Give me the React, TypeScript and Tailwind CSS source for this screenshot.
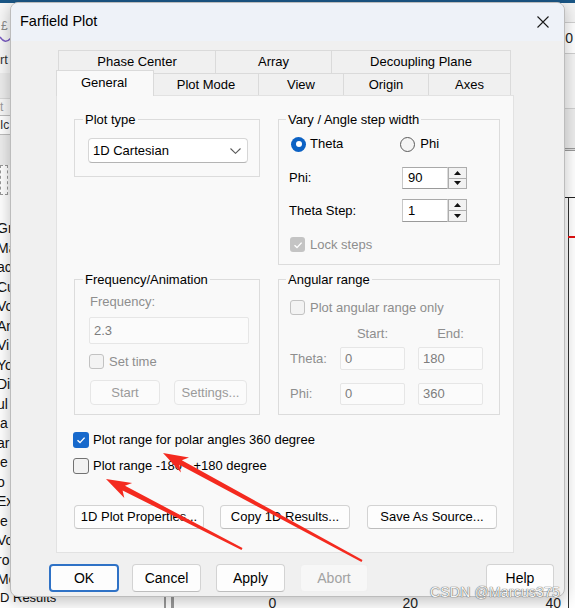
import React from "react";

function arrowPoints(tx: number, ty: number, ex: number, ey: number) {
  const L = 25, W = 8.5, w0 = 2.6, w1 = 1.1;
  const dx = ex - tx, dy = ey - ty;
  const len = Math.hypot(dx, dy);
  const ux = dx / len, uy = dy / len;
  const nx = -uy, ny = ux;
  const bx = tx + ux * L, by = ty + uy * L;
  const kx = tx + ux * (L - 5), ky = ty + uy * (L - 5);
  const p: number[][] = [
    [tx, ty],
    [bx + nx * W, by + ny * W],
    [kx + nx * w0, ky + ny * w0],
    [ex + nx * w1, ey + ny * w1],
    [ex - nx * w1, ey - ny * w1],
    [kx - nx * w0, ky - ny * w0],
    [bx - nx * W, by - ny * W],
  ];
  return p.map((q) => q[0].toFixed(1) + "," + q[1].toFixed(1)).join(" ");
}

function Check({ on, disabled }: { on?: boolean; disabled?: boolean }) {
  if (on) {
    return (
      <div
        className={
          disabled
            ? "w-[15px] h-[15px] rounded-[3px] bg-[#c4c4c4] flex items-center justify-center shrink-0"
            : "w-[16px] h-[16px] rounded-[3px] bg-[#1769cc] flex items-center justify-center shrink-0"
        }
      >
        <svg width="12" height="12" viewBox="0 0 12 12">
          <path d="M2.5 6.3 L5 8.6 L9.6 3.6" fill="none" stroke="#ffffff" strokeWidth="1.4" />
        </svg>
      </div>
    );
  }
  return (
    <div
      className={
        disabled
          ? "w-[15px] h-[15px] rounded-[3px] border border-[#c2c2c2] bg-[#f3f3f3] shrink-0"
          : "w-[16px] h-[16px] rounded-[3px] border border-[#727272] bg-[#f2f2f2] shrink-0"
      }
    />
  );
}

function Radio({ on }: { on?: boolean }) {
  if (on) {
    return (
      <div className="w-[15px] h-[15px] rounded-full bg-[#0c62c4] flex items-center justify-center shrink-0">
        <div className="w-[6px] h-[6px] rounded-full bg-white" />
      </div>
    );
  }
  return <div className="w-[15px] h-[15px] rounded-full border border-[#5b5b5b] bg-[#f4f4f4] shrink-0" />;
}

function Spin({ value, h }: { value: string; h: string }) {
  return (
    <div className={"flex " + h}>
      <div className="w-[46px] h-full bg-white border border-[#dadada] border-t-[#a9a9a9] border-l-[#c8c8c8] border-b-[#9a9a9a] flex items-center pl-[5px] text-[13px] text-black">
        {value}
      </div>
      <div className="w-[19px] h-full flex flex-col border border-[#adadad] bg-[#e9e9e9]">
        <div className="flex-1 flex items-center justify-center border-b border-[#adadad] bg-[#f2f2f2]">
          <svg width="7" height="4" viewBox="0 0 7 4">
            <path d="M0 4 L3.5 0 L7 4 Z" fill="#111" />
          </svg>
        </div>
        <div className="flex-1 flex items-center justify-center bg-[#f2f2f2]">
          <svg width="7" height="4" viewBox="0 0 7 4">
            <path d="M0 0 L3.5 4 L7 0 Z" fill="#111" />
          </svg>
        </div>
      </div>
    </div>
  );
}

function DisInput({ value, w, h }: { value: string; w: string; h: string }) {
  return (
    <div className={w + " " + h + " bg-[#fbfbfb] border border-[#e6e6e6] rounded-[2px] flex items-center pl-[4px] text-[13px] text-[#7d7d7d]"}>
      {value}
    </div>
  );
}

export default function App() {
  const leftWords = [
    "Gro", "Ma", "ac", "Cu", "Vo", "An", "Vi", "Yo", "Di", "ul",
    "la", "ar", "ie", "o", "Ex", "ie", "Vo", "ro", "Me",
  ];
  return (
    <div className="relative w-[575px] h-[608px] overflow-hidden bg-[#f4f4f4] font-['Liberation_Sans',Arial,sans-serif] text-[13px] text-black">
      {/* background application behind the dialog */}
      <div className="absolute inset-0 flex flex-col">
        <div className="h-[3px] bg-[#1b5786] shrink-0" />
        <div className="flex flex-1 min-h-0">
          <div className="w-[60px] flex flex-col bg-[#f7f7f7]">
            <div className="h-[30px] shrink-0 flex items-end pl-[1px] text-[#8a8a8a] text-[12px] leading-[14px]">£</div>
            <div className="h-[14px] shrink-0 flex items-center">
              <svg width="12" height="8" viewBox="0 0 12 8">
                <path d="M0 1 Q5 9 11 2" fill="none" stroke="#7a5cc2" strokeWidth="1.5" />
              </svg>
            </div>
            <div className="h-[26px] shrink-0 flex items-center text-[13px] text-[#333]">rt</div>
            <div className="h-[26px] shrink-0 bg-[#ececec] border-b border-[#d8d8d8]" />
            <div className="h-[16px] shrink-0 flex items-center text-[12px] text-[#9a9a9a]">t</div>
            <div className="h-[20px] shrink-0 border-y border-[#bdbdbd] bg-white flex items-center text-[12px] text-[#333]">Ic</div>
            <div className="h-[30px] shrink-0 bg-[#ededed]" />
            <div className="h-[30px] shrink-0 border border-dashed border-[#999] bg-white mr-[50px]" />
            <div className="h-[23px] shrink-0 bg-white" />
            <div className="flex flex-col bg-white flex-1 pt-[1px]">
              {leftWords.map((w, i) => (
                <div key={i} className="h-[19.5px] shrink-0 leading-[19.5px] text-[14px] text-[#111] -ml-[3px]">
                  {w}
                </div>
              ))}
              <div className="h-[14px] shrink-0 leading-[14px] text-[13px] text-[#111] mt-[1px]">D Results</div>
            </div>
          </div>
          <div className="flex-1 flex flex-col justify-end bg-white">
            <div className="h-[12px] flex items-start text-[14px] text-[#222] leading-[14px]">
              <div className="w-[106px]" />
              <div className="w-[2px] h-[12px] bg-[#9a9a9a]" />
              <div className="w-[5px]" />
              <div className="w-[3px] h-[12px] bg-[#9a9a9a]" />
              <div className="w-[93px]" />
              <div className="w-[10px] text-center">0</div>
              <div className="w-[123px]" />
              <div className="w-[20px] text-center">20</div>
              <div className="w-[123px]" />
              <div className="w-[20px] text-center">40</div>
            </div>
          </div>
          <div className="w-[12px] flex flex-col bg-white">
            <div className="h-[20px] bg-[#f4f4f4] border-b border-[#d0d0d0]" />
            <div className="h-[30px] flex items-center text-[14px] text-[#222] pl-[2px]">0</div>
            <div className="h-[55px] border-t border-[#cfcfcf] bg-[#f4f4f4]" />
            <div className="h-[40px] border-t border-[#cfcfcf] bg-[#ececec]" />
            <div className="h-[3px] border-y border-[#9a9a9a] bg-[#dedede]" />
            <div className="h-[47px] bg-white border-b border-[#222]" />
            <div className="flex-1 border-l border-[#333] ml-[5px] relative">
              <div className="absolute left-[-1px] top-[38px] w-[8px] h-[2px] bg-[#e01010]" />
            </div>
          </div>
        </div>
      </div>

      {/* dialog window */}
      <div className="absolute left-[10px] top-[2px] w-[555px] h-[595px] rounded-[8px] border border-[#bcbcbc] bg-[#f0f0f0] shadow-[0_4px_16px_rgba(0,0,0,0.25)] overflow-hidden flex flex-col">
        <div className="h-[38px] shrink-0 bg-[#eef2f8] flex items-center justify-between pl-[9px] pr-[15px]">
          <div className="text-[14.5px] text-black">Farfield Plot</div>
          <svg width="12" height="12" viewBox="0 0 12 12">
            <path d="M0.5 0.5 L11.5 11.5 M11.5 0.5 L0.5 11.5" stroke="#1a1a1a" strokeWidth="1.1" />
          </svg>
        </div>

        <div className="flex flex-col pt-[9px]">
          {/* back row of tabs */}
          <div className="flex ml-[47px] h-[23px]">
            <div className="w-[158px] h-full border border-b-0 border-[#dadada] bg-[#f0f0f0] flex items-center justify-center pb-[1px]">Phase Center</div>
            <div className="w-[116px] h-full border border-b-0 border-l-0 border-[#dadada] bg-[#f0f0f0] flex items-center justify-center pb-[1px]">Array</div>
            <div className="w-[179px] h-full border border-b-0 border-l-0 border-[#dadada] bg-[#f0f0f0] flex items-center justify-center pb-[1px]">Decoupling Plane</div>
          </div>
          {/* front row of tabs */}
          <div className="flex ml-[45px] h-[22px] relative z-10 items-end">
            <div className="w-[98px] h-[26px] -mb-[1px] border border-b-0 border-[#dadada] bg-[#f9f9f9] flex items-center justify-center pb-[2px] pr-[2px]">General</div>
            <div className="w-[105px] h-[22px] border border-b-0 border-l-0 border-[#dadada] bg-[#f0f0f0] flex items-center justify-center">Plot Mode</div>
            <div className="w-[85px] h-[22px] border border-b-0 border-l-0 border-[#dadada] bg-[#f0f0f0] flex items-center justify-center">View</div>
            <div className="w-[85px] h-[22px] border border-b-0 border-l-0 border-[#dadada] bg-[#f0f0f0] flex items-center justify-center">Origin</div>
            <div className="w-[82px] h-[22px] border border-b-0 border-l-0 border-[#dadada] bg-[#f0f0f0] flex items-center justify-center">Axes</div>
          </div>

          {/* panel */}
          <div className="ml-[45px] w-[458px] h-[458px] border border-[#e2e2e2] bg-[#f9f9f9] flex flex-col pl-[16px] pt-[16px]">
            <div className="grid grid-cols-[186px_222px] gap-x-[18px] gap-y-[7px] ml-[1px] items-start">
              {/* Plot type */}
              <fieldset className="border border-[#dcdcdc] pl-[13px] pb-[13px] h-[65px]">
                <legend className="-ml-[5px] px-[2px] leading-[15px]">Plot type</legend>
                <div className="mt-[11px] w-[160px] h-[25px] bg-white border border-[#d6d6d6] border-b-[#b4b4b4] rounded-[4px] flex items-center justify-between pl-[4px] pr-[6px]">
                  <span>1D Cartesian</span>
                  <svg width="11" height="6" viewBox="0 0 11 6">
                    <path d="M0.5 0.5 L5.5 5.3 L10.5 0.5" fill="none" stroke="#5a5a5a" strokeWidth="1.1" />
                  </svg>
                </div>
              </fieldset>

              {/* Vary / Angle step width */}
              <fieldset className="border border-[#dcdcdc] pl-[10px] h-[153px]">
                <legend className="-ml-[3px] px-[2px] leading-[15px]">Vary / Angle step width</legend>
                <div className="mt-[8px] h-[18px] flex items-center">
                  <div className="ml-[2px]"><Radio on /></div>
                  <span className="ml-[4px]">Theta</span>
                  <div className="ml-[57px]"><Radio /></div>
                  <span className="ml-[5px]">Phi</span>
                </div>
                <div className="mt-[14px] h-[22px] flex items-center">
                  <span className="w-[113px]">Phi:</span>
                  <Spin value="90" h="h-[22px]" />
                </div>
                <div className="mt-[10px] h-[23px] flex items-center">
                  <span className="w-[113px]">Theta Step:</span>
                  <Spin value="1" h="h-[23px]" />
                </div>
                <div className="mt-[15px] h-[15px] flex items-center">
                  <div className="ml-[1px]"><Check on disabled /></div>
                  <span className="ml-[5px] text-[#8e8e8e]">Lock steps</span>
                </div>
              </fieldset>

              {/* Frequency / Animation */}
              <fieldset className="border border-[#dcdcdc] pl-[14px] h-[143px]">
                <legend className="-ml-[6px] px-[2px] leading-[15px]">Frequency/Animation</legend>
                <div className="mt-[7px] h-[15px] flex items-center text-[#8e8e8e] ml-[1px]">Frequency:</div>
                <div className="mt-[8px]">
                  <DisInput value="2.3" w="w-[160px]" h="h-[27px]" />
                </div>
                <div className="mt-[10px] h-[15px] flex items-center">
                  <Check disabled />
                  <span className="ml-[5px] text-[#8e8e8e]">Set time</span>
                </div>
                <div className="mt-[11px] flex h-[25px]">
                  <div className="ml-[1px] w-[70px] h-full border border-[#e6e6e6] rounded-[4px] bg-[#fbfbfb] flex items-center justify-center text-[#9a9a9a]">Start</div>
                  <div className="ml-[14px] w-[73px] h-full border border-[#e6e6e6] rounded-[4px] bg-[#fbfbfb] flex items-center justify-center text-[#9a9a9a]">Settings...</div>
                </div>
              </fieldset>

              {/* Angular range */}
              <fieldset className="border border-[#dcdcdc] pl-[11px] h-[143px]">
                <legend className="-ml-[4px] px-[2px] leading-[15px]">Angular range</legend>
                <div className="mt-[13px] h-[15px] flex items-center">
                  <Check disabled />
                  <span className="ml-[5px] text-[#8e8e8e]">Plot angular range only</span>
                </div>
                <div className="mt-[11px] h-[15px] flex items-center text-[#8e8e8e]">
                  <div className="w-[50px]" />
                  <div className="w-[65px] text-center">Start:</div>
                  <div className="w-[13px]" />
                  <div className="w-[65px] text-center">End:</div>
                </div>
                <div className="mt-[6px] h-[23px] flex items-center">
                  <div className="w-[50px] text-[#8e8e8e]">Theta:</div>
                  <DisInput value="0" w="w-[65px]" h="h-[23px]" />
                  <div className="w-[13px]" />
                  <DisInput value="180" w="w-[65px]" h="h-[23px]" />
                </div>
                <div className="mt-[13px] h-[22px] flex items-center">
                  <div className="w-[50px] text-[#8e8e8e]">Phi:</div>
                  <DisInput value="0" w="w-[65px]" h="h-[22px]" />
                  <div className="w-[13px]" />
                  <DisInput value="360" w="w-[65px]" h="h-[22px]" />
                </div>
              </fieldset>
            </div>

            <div className="mt-[16px] h-[17px] flex items-center">
              <Check on />
              <span className="ml-[4px]">Plot range for polar angles 360 degree</span>
            </div>
            <div className="mt-[9px] h-[17px] flex items-center">
              <Check />
              <span className="ml-[4px]">Plot range -180 - +180 degree</span>
            </div>

            <div className="mt-[31px] flex h-[24px] ml-[1px]">
              <div className="w-[130px] h-full bg-[#fdfdfd] border border-[#d3d3d3] border-b-[#bdbdbd] rounded-[4px] flex items-center justify-center">1D Plot Properties...</div>
              <div className="ml-[16px] w-[130px] h-full bg-[#fdfdfd] border border-[#d3d3d3] border-b-[#bdbdbd] rounded-[4px] flex items-center justify-center">Copy 1D Results...</div>
              <div className="ml-[17px] w-[130px] h-full bg-[#fdfdfd] border border-[#d3d3d3] border-b-[#bdbdbd] rounded-[4px] flex items-center justify-center">Save As Source...</div>
            </div>
          </div>

          {/* bottom buttons */}
          <div className="mt-[11px] flex h-[28px] ml-[38px] text-[14px]">
            <div className="w-[70px] h-full bg-[#fdfdfd] border-[2px] border-[#2f72c6] rounded-[4px] flex items-center justify-center">OK</div>
            <div className="ml-[13px] w-[69px] h-full bg-[#fdfdfd] border border-[#d3d3d3] border-b-[#bdbdbd] rounded-[4px] flex items-center justify-center">Cancel</div>
            <div className="ml-[15px] w-[69px] h-full bg-[#fdfdfd] border border-[#d3d3d3] border-b-[#bdbdbd] rounded-[4px] flex items-center justify-center">Apply</div>
            <div className="ml-[15px] w-[68px] h-full bg-[#f7f7f7] border border-[#efefef] rounded-[4px] flex items-center justify-center text-[#a2a2a2]">Abort</div>
            <div className="ml-[118px] w-[68px] h-full bg-[#fdfdfd] border border-[#d3d3d3] border-b-[#bdbdbd] rounded-[4px] flex items-center justify-center">Help</div>
          </div>
        </div>
      </div>

      {/* red annotation arrows */}
      <svg className="absolute inset-0 pointer-events-none" width="575" height="608" viewBox="0 0 575 608">
        <polygon points={arrowPoints(163, 453, 362, 561)} fill="#f42a1f" />
        <polygon points={arrowPoints(106, 479, 242, 549)} fill="#f42a1f" />
      </svg>

      {/* watermark */}
      <div className="absolute left-[430px] top-[583px] text-[14px] leading-[18px] text-[#f4f4f4] [text-shadow:0_0_1px_#555,0_0_1px_#555] tracking-[0.2px]">
        CSDN @Marcus375
      </div>
    </div>
  );
}
